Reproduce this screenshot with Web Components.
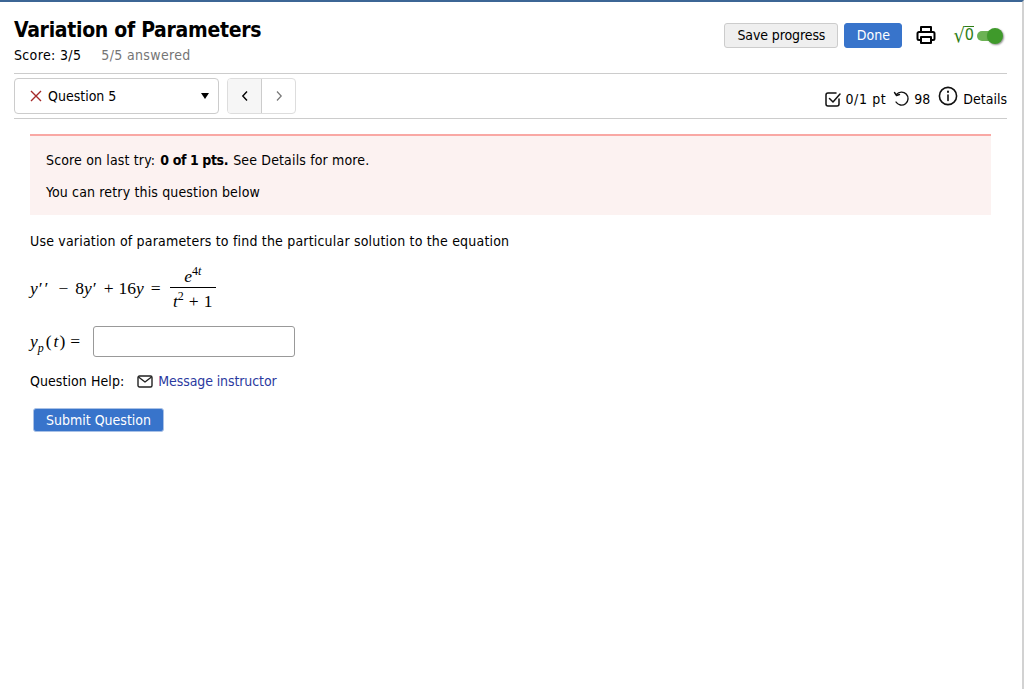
<!DOCTYPE html>
<html>
<head>
<meta charset="utf-8">
<title>Variation of Parameters</title>
<style>
    html, body { margin: 0; padding: 0; background: #fff; height: 689px; overflow: hidden; }
    body { font-family: "DejaVu Sans Condensed", "DejaVu Sans", sans-serif; font-stretch: condensed; font-size: 14px; color: #000; }
    score-alert b { letter-spacing: -.4px; margin: 0 1px; }
</style>
</head>
<body>
<assess-page>
    <assess-header slot="header" title-text="Variation of Parameters"></assess-header>
    <question-bar slot="bar"></question-bar>
    <score-alert>
        <p>Score on last try: <b>0 of 1 pts.</b> See Details for more.</p>
        <p>You can retry this question below</p>
    </score-alert>
    <question-body></question-body>
</assess-page>

<script>
class AssessPage extends HTMLElement {
    constructor() {
        super();
        this.attachShadow({ mode: 'open' });
        this.shadowRoot.innerHTML = `
            <style>
                :host {
                    display: block;
                    border-top: 2px solid #3c6695;
                    border-right: 2px solid #d2d2d2;
                    padding: 0 15px 0 14px;
                    height: 689px;
                    box-sizing: border-box;
                }
                .inner { padding: 0 16px; }
            </style>
            <slot name="header"></slot>
            <slot name="bar"></slot>
            <div class="inner"><slot></slot></div>
        `;
    }
}

class AssessHeader extends HTMLElement {
    static observedAttributes = ['title-text'];

    constructor() {
        super();
        this.attachShadow({ mode: 'open' });
        this.shadowRoot.innerHTML = `
            <style>
                :host {
                    display: flex;
                    justify-content: space-between;
                    height: 72px;
                    box-sizing: border-box;
                    border-bottom: 1px solid #ccc;
                }
                h1 { margin: 15px 0 0; font-size: 21px; letter-spacing: -.3px; line-height: 27px; font-weight: bold; }
                .score { margin-top: 3px; line-height: 17px; display: flex; gap: 20px; letter-spacing: .35px; }
                .muted { color: #757575; }
                .tools { display: flex; align-items: center; height: 24px; margin-top: 21px; }
                button {
                    font: inherit;
                    height: 25px;
                    border-radius: 3px;
                    padding: 0;
                }
                .save { width: 114px; background: #efefef; border: 1px solid #ccc; color: #000; letter-spacing: -.1px; }
                .done { width: 58px; margin-left: 6px; background: #3874cb; border: 1px solid #3874cb; color: #fff; }
                .print { margin-left: 14px; display: block; }
                .sqrt { margin-left: 17px; color: #2e7d14; font-size: 20px; line-height: 24px; display: flex; }
                .sqrt span { border-top: 1px solid #2e7d14; line-height: 16px; height: 17px; font-size: 16px; margin-top: 3px; }
                .toggle { position: relative; width: 25px; height: 10px; margin: 2px 5px 0 3px; background: #6cb254; border-radius: 5px; }
                .toggle i {
                    position: absolute; right: -1px; top: -3px;
                    width: 16px; height: 16px; border-radius: 50%;
                    background: #3f9a2b;
                    box-shadow: 1px 1px 2px rgba(0,0,0,.45);
                }
            </style>
            <div>
                <h1 id="title"></h1>
                <div class="score"><span>Score: 3/5</span><span class="muted">5/5 answered</span></div>
            </div>
            <div class="tools">
                <button class="save">Save progress</button>
                <button class="done">Done</button>
                <svg class="print" width="20" height="22" viewBox="0 0 20 22" fill="none" stroke="#000" stroke-width="2" stroke-linejoin="round">
                    <path d="M5 8V3h10v5"/>
                    <path d="M5 16H3a1.5 1.5 0 0 1-1.5-1.5v-5A1.5 1.5 0 0 1 3 8h14a1.5 1.5 0 0 1 1.5 1.5v5A1.5 1.5 0 0 1 17 16h-2"/>
                    <rect x="5" y="13" width="10" height="6"/>
                </svg>
                <div class="sqrt">√<span>0</span></div>
                <div class="toggle"><i></i></div>
            </div>
        `;
    }

    attributeChangedCallback(name, oldValue, newValue) {
        if (name === 'title-text') {
            this.shadowRoot.querySelector('#title').textContent = newValue || '';
        }
    }
}

class QuestionBar extends HTMLElement {
    constructor() {
        super();
        this.attachShadow({ mode: 'open' });
        this.shadowRoot.innerHTML = `
            <style>
                :host {
                    display: flex;
                    justify-content: space-between;
                    align-items: center;
                    height: 45px;
                    box-sizing: border-box;
                    border-bottom: 1px solid #ccc;
                }
                .left { display: flex; align-items: center; }
                .select {
                    width: 205px; height: 36px; box-sizing: border-box;
                    border: 1px solid #ccc; border-radius: 4px;
                    display: flex; align-items: center;
                    padding: 0 9px 0 15px;
                }
                .select .label { margin-left: 6px; flex: 1; }
                .arrow { width: 0; height: 0; border-left: 4px solid transparent; border-right: 4px solid transparent; border-top: 6px solid #000; }
                .nav { display: flex; margin-left: 8px; height: 36px; box-sizing: border-box; border: 1px solid #ddd; border-radius: 4px; }
                .nav div { width: 33px; display: flex; align-items: center; justify-content: center; }
                .nav .prev { background: #f6f6f6; border-right: 1px solid #ccc; border-radius: 3px 0 0 3px; }
                .right { display: flex; align-items: center; margin-top: 6px; }
                .right svg { display: block; }
                .pts { margin-left: 4px; letter-spacing: .6px; }
                .tries { margin-left: 4px; }
            </style>
            <div class="left">
                <div class="select">
                    <svg width="12" height="12" viewBox="0 0 12 12" stroke="#a52a2a" stroke-width="1.4" fill="none"><path d="M1 1l10 10M11 1L1 11"/></svg>
                    <span class="label">Question 5</span>
                    <span class="arrow"></span>
                </div>
                <div class="nav">
                    <div class="prev"><svg width="8" height="12" viewBox="0 0 8 12" fill="none" stroke="#000" stroke-width="1.4"><path d="M6 1.5L1.8 6 6 10.5"/></svg></div>
                    <div><svg width="8" height="12" viewBox="0 0 8 12" fill="none" stroke="#777" stroke-width="1.2"><path d="M2 1.5L6.2 6 2 10.5"/></svg></div>
                </div>
            </div>
            <div class="right">
                <svg width="16" height="16" viewBox="0 0 16 16" fill="none" stroke="#111" stroke-width="1.5" stroke-linecap="round" stroke-linejoin="round">
                    <path d="M14 8v5a2 2 0 0 1-2 2H3a2 2 0 0 1-2-2V4a2 2 0 0 1 2-2h8"/>
                    <path d="M4.5 7.5L8 11l7-8"/>
                </svg>
                <span class="pts">0/1 pt</span>
                <svg style="margin-left:7px" width="17" height="16" viewBox="0 0 17 16" fill="none" stroke="#111" stroke-width="1.4" stroke-linecap="round" stroke-linejoin="round">
                    <path d="M3.5 3.5A6.5 6.5 0 1 1 3 11"/>
                    <path d="M1.5 1.5l2 3 3-1"/>
                </svg>
                <span class="tries">98</span>
                <svg style="margin:-6px 0 0 8px" width="20" height="20" viewBox="0 0 20 20" fill="none" stroke="#111" stroke-width="1.6" stroke-linecap="round">
                    <circle cx="10" cy="10" r="8.6"/>
                    <path d="M10 9v5.5"/>
                    <path d="M10 5.6v.4" stroke-width="2"/>
                </svg>
                <span style="margin-left:5px">Details</span>
            </div>
        `;
    }
}

class ScoreAlert extends HTMLElement {
    constructor() {
        super();
        this.attachShadow({ mode: 'open' });
        this.shadowRoot.innerHTML = `
            <style>
                :host {
                    display: block;
                    margin-top: 15px;
                    height: 81px;
                    box-sizing: border-box;
                    background: #fcf2f1;
                    border-top: 2px solid #f9a8a4;
                    padding: 16px 16px 0;
                    letter-spacing: .15px;
                }
                ::slotted(p) { margin: 0 0 15px; line-height: 17px; }
            </style>
            <slot></slot>
        `;
    }
}

class QuestionBody extends HTMLElement {
    constructor() {
        super();
        this.attachShadow({ mode: 'open' });
        this.shadowRoot.innerHTML = `
            <style>
                :host { display: block; padding-top: 17px; }
                .text { line-height: 18px; letter-spacing: .19px; }
                .math { font-family: "Liberation Serif", serif; font-size: 17.5px; font-style: italic; white-space: nowrap; display: inline-flex; align-items: baseline; }
                .math .n { font-style: normal; }
                .math .op { font-style: normal; margin: 0 5px; }
                .eq { display: flex; align-items: center; margin-top: 13px; height: 50px; }
                .frac { display: inline-flex; flex-direction: column; align-items: center; margin-left: 9px; width: 46px; }
                .frac .top { height: 24px; line-height: 27px; border-bottom: 1px solid #000; width: 100%; text-align: center; }
                .frac .bot { line-height: 26px; }
                sup { font-size: 12px; line-height: 0; }
                sub { font-size: 12px; line-height: 0; }
                .answer { display: flex; align-items: center; margin-top: 13px; height: 31px; }
                input { width: 202px; height: 31px; margin-left: 13px; box-sizing: border-box; border: 1px solid #999; border-radius: 3px; padding: 0; background: #fff; }
                .help { display: flex; align-items: center; margin-top: 15px; line-height: 18px; }
                .help span { letter-spacing: .07px; }
                .help svg { margin-left: 13px; display: block; }
                a { color: #2b3aa0; text-decoration: none; margin-left: 5px; letter-spacing: -.1px; }
                .submit {
                    display: block; font: inherit; margin: 18px 0 0 3px; width: 131px; height: 24px;
                    background: #3874cb; color: #fff; border: 1px solid #a9c1e6; border-radius: 3px; padding: 0;
                }
            </style>
            <div class="text">Use variation of parameters to find the particular solution to the equation</div>
            <div class="eq">
                <span class="math"><span>y</span><span style="letter-spacing:2px">′′</span><span class="op" style="margin-left:9px;margin-right:7px">−</span><span class="n">8</span><span>y</span><span>′</span><span class="op" style="margin-left:8px">+</span><span class="n">16</span><span>y</span><span class="op" style="margin:0 0 0 7px">=</span></span>
                <span class="math frac">
                    <span class="top">e<sup><span class="n">4</span>t</sup></span>
                    <span class="bot">t<sup class="n">2</sup><span class="n" style="margin-left:5px">+</span><span class="n" style="margin-left:5px">1</span></span>
                </span>
            </div>
            <div class="answer">
                <span class="math"><span>y<sub>p</sub></span><span class="n" style="margin-left:2px">(</span><span style="margin-left:2px">t</span><span class="n" style="margin-left:1px">)</span><span class="op" style="margin-right:0">=</span></span>
                <input type="text" aria-label="answer">
            </div>
            <div class="help">
                <span>Question Help:</span>
                <svg width="16" height="13" viewBox="0 0 16 13" fill="none" stroke="#222" stroke-width="1.4" stroke-linejoin="round">
                    <rect x="1" y="1" width="14" height="11" rx="1.5"/>
                    <path d="M1.5 2l6.5 5 6.5-5"/>
                </svg>
                <a href="#">Message instructor</a>
            </div>
            <button class="submit">Submit Question</button>
        `;
    }
}

customElements.define('assess-page', AssessPage);
customElements.define('assess-header', AssessHeader);
customElements.define('question-bar', QuestionBar);
customElements.define('score-alert', ScoreAlert);
customElements.define('question-body', QuestionBody);
</script>
</body>
</html>
